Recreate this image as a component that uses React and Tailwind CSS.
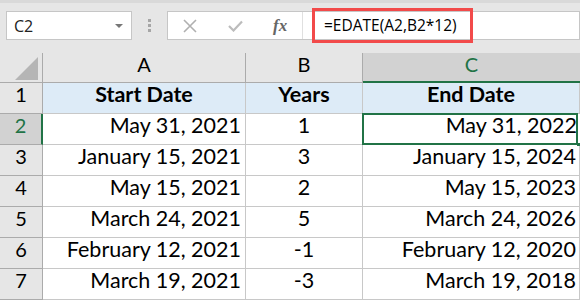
import React from "react";

const rows = [
  ["May 31, 2021", "1", "May 31, 2022"],
  ["January 15, 2021", "3", "January 15, 2024"],
  ["May 15, 2021", "2", "May 15, 2023"],
  ["March 24, 2021", "5", "March 24, 2026"],
  ["February 12, 2021", "-1", "February 12, 2020"],
  ["March 19, 2021", "-3", "March 19, 2018"],
];

const font = { fontFamily: "Lato, 'Liberation Sans', sans-serif" };

const Toolbar = () => (
  <div className="h-[53px] bg-[#e6e6e6] border-t-[3px] border-[#d9d9d9] flex items-start pt-[8px] relative">
    <div className="ml-[6px] w-[126px] h-[29px] bg-white border border-[#c6c6c6] flex items-center justify-between pl-[7px] pr-[8px]">
      <span className="text-[16px] text-[#222]" style={{ fontFamily: "'Open Sans', sans-serif" }}>C2</span>
      <span className="w-0 h-0 border-l-[4px] border-r-[4px] border-t-[4px] border-l-transparent border-r-transparent border-t-[#777]" />
    </div>
    <div className="ml-[16px] h-[29px] flex flex-col justify-center gap-[2px]">
      <span className="w-[3px] h-[3px] bg-[#a6a6a6]" />
      <span className="w-[3px] h-[3px] bg-[#a6a6a6]" />
      <span className="w-[3px] h-[3px] bg-[#a6a6a6]" />
    </div>
    <div className="ml-[16px] flex-1 h-[29px] bg-white border border-[#c6c6c6] flex items-center">
      <div className="w-[135px] flex items-center border-r border-[#e0e0e0] h-full">
        <svg width="14" height="14" viewBox="0 0 14 14" className="ml-[15px]">
          <path d="M1 1 L13 13 M13 1 L1 13" stroke="#b0b0b0" strokeWidth="1.6" />
        </svg>
        <svg width="15" height="12" viewBox="0 0 15 12" className="ml-[31px]">
          <path d="M1 6 L5.5 10.5 L14 1.5" stroke="#bcbcbc" strokeWidth="2.2" fill="none" />
        </svg>
        <span
          className="ml-[30px] text-[17px] italic font-bold text-[#666] leading-none"
          style={{ fontFamily: "'Liberation Serif', serif" }}
        >
          fx
        </span>
      </div>
      <div className="flex-1 h-full" />
    </div>
    <div className="absolute left-[312px] top-[5px] w-[161px] h-[35px] border-[3px] border-[#f24a4a] flex items-center pl-[9px]">
      <span className="text-[15.5px] text-black" style={{ fontFamily: "'Open Sans', sans-serif" }}>=EDATE(A2,B2*12)</span>
    </div>
  </div>
);

const App = () => {
  const head = "bg-[#e6e6e6] border-r border-[#ababab] flex items-end justify-center pb-[3px] text-[20px] text-black";
  const rowHead = "bg-[#e6e6e6] border-r border-b border-[#ababab] flex items-end justify-center pb-[4px] text-[20px] text-black";
  const cell = "border-r border-b border-[#c8c8c8] flex items-end pb-[3px] text-[21.5px] text-black";
  return (
    <div className="w-[580px] h-[302px] overflow-hidden bg-white" style={font}>
      <Toolbar />
      <div className="grid grid-cols-[43px_203px_117px_217px] grid-rows-[30px_31px_31px_31px_31px_31px_31px_31px]">
        <div className="bg-[#e6e6e6] border-r border-b border-[#ababab] relative">
          <svg width="24" height="23" viewBox="0 0 24 23" className="absolute left-[15px] top-[4px]">
            <path d="M23 0 L23 23 L0 23 Z" fill="#b5b5b5" />
          </svg>
        </div>
        <div className={head + " border-b"}>A</div>
        <div className={head + " border-b"}>B</div>
        <div className="bg-[#d2d2d2] border-b-2 border-[#217346] flex items-end justify-center pb-[2px] text-[20px] text-[#217346]">C</div>

        <div className={rowHead}>1</div>
        <div className={cell + " bg-[#ddebf7] justify-center font-bold"}>Start Date</div>
        <div className={cell + " bg-[#ddebf7] justify-center font-bold"}>Years</div>
        <div className={cell + " bg-[#ddebf7] justify-center font-bold"}>End Date</div>

        {rows.map((r, i) => {
          const sel = i === 0;
          return (
            <React.Fragment key={i}>
              <div
                className={
                  sel
                    ? "bg-[#d2d2d2] border-r-2 border-r-[#217346] border-b border-b-[#ababab] flex items-end justify-center pb-[4px] text-[20px] text-[#217346]"
                    : rowHead
                }
              >
                {i + 2}
              </div>
              <div className={cell + " justify-end pr-[4px]"}>{r[0]}</div>
              <div className={cell + " justify-center"}>{r[1]}</div>
              {sel ? (
                <div className="relative border-b border-[#c8c8c8] flex items-end justify-end pb-[3px] pr-[3px] text-[21.5px] text-black">
                  <div className="absolute -left-[1px] -top-[1px] right-[2px] -bottom-[1px] border-2 border-[#217346]" />
                  <div className="absolute right-0 -bottom-[2px] w-[3px] h-[3px] bg-[#217346]" />
                  {r[2]}
                </div>
              ) : (
                <div className={cell + " justify-end pr-[3px]"}>{r[2]}</div>
              )}
            </React.Fragment>
          );
        })}
      </div>
    </div>
  );
};

export default App;
